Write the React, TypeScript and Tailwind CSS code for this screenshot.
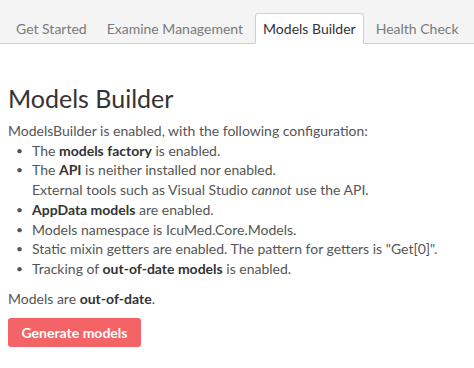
import React from "react";

const tabs = ["Get Started", "Examine Management", "Models Builder", "Health Check"];

function Bullet() {
  return <span className="w-[16px] shrink-0 text-[12px]">•</span>;
}

export default function App() {
  return (
    <div className="w-[474px] h-[368px] bg-white overflow-hidden" style={{ fontFamily: "Lato, 'Open Sans', sans-serif" }}>
      <div className="h-[44px] bg-[#f4f4f4] border-b border-[#cfcfcf] flex items-end pl-[6px]">
        {tabs.map((t) =>
          t === "Models Builder" ? (
            <div
              key={t}
              className="h-[31px] -mb-px mx-[2px] px-[7px] flex items-center bg-white border border-[#cfcfcf] border-b-white rounded-t-[3px] text-[14px] text-[#333]"
            >
              {t}
            </div>
          ) : (
            <div key={t} className="h-[30px] px-[10px] flex items-center text-[14px] text-[#7a7a7a]">
              {t}
            </div>
          )
        )}
      </div>
      <div className="px-[8px] pt-[40px]">
        <h1 className="text-[25px] leading-[28px] text-[#333] font-normal">Models Builder</h1>
        <div className="mt-[9px] text-[14px] leading-[19.7px] text-[#555]">
          <p>ModelsBuilder is enabled, with the following configuration:</p>
          <ul className="pl-[8px]">
            <li className="flex"><Bullet /><span>The <b className="text-[#333]">models factory</b> is enabled.</span></li>
            <li className="flex"><Bullet /><span>The <b className="text-[#333]">API</b> is neither installed nor enabled.<br />External tools such as Visual Studio <i>cannot</i> use the API.</span></li>
            <li className="flex"><Bullet /><span><b className="text-[#333]">AppData models</b> are enabled.</span></li>
            <li className="flex"><Bullet /><span>Models namespace is IcuMed.Core.Models.</span></li>
            <li className="flex"><Bullet /><span>Static mixin getters are enabled. The pattern for getters is "Get[0]".</span></li>
            <li className="flex"><Bullet /><span>Tracking of <b className="text-[#333]">out-of-date models</b> is enabled.</span></li>
          </ul>
          <p className="mt-[10px]">Models are <b className="text-[#333]">out-of-date</b>.</p>
        </div>
        <button className="mt-[10px] h-[29px] w-[133px] rounded-[3px] bg-[#f46466] text-white font-bold text-[14px]">
          Generate models
        </button>
      </div>
    </div>
  );
}
